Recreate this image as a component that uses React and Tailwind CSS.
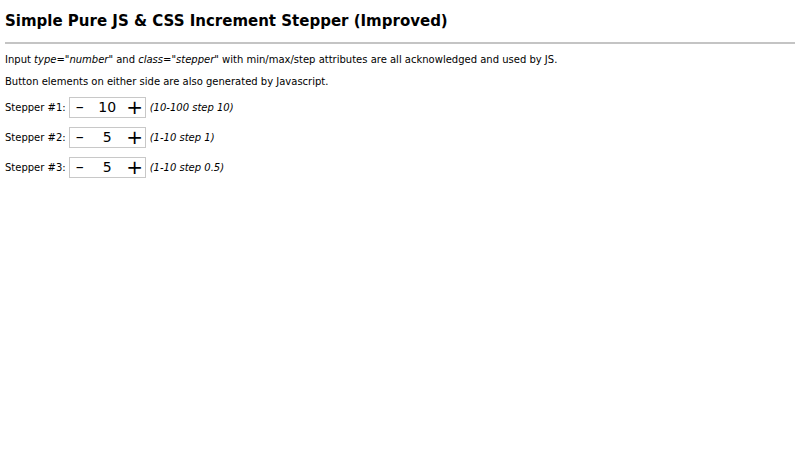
import React from "react";

function Stepper({ label, value, note }) {
  return (
    <div className="flex items-center h-[20px] mb-[10px]">
      <span>{label}:</span>
      <div className="ml-[3px] flex items-center w-[77px] h-[21px] border border-[#c8c8c8] bg-white">
        <button className="w-[20px] text-[16px] leading-none text-black">–</button>
        <span className="flex-1 text-center text-[14px]">{value}</span>
        <button className="w-[20px] text-[20px] leading-none text-black">+</button>
      </div>
      <em className="ml-[4px]">{note}</em>
    </div>
  );
}

export default function App() {
  return (
    <div className="min-h-[450px] bg-white px-[5px] pt-[10px] text-[10px] text-black font-['DejaVu_Sans',sans-serif]">
      <h1 className="text-[15px] font-bold leading-[22px]">
        Simple Pure JS &amp; CSS Increment Stepper (Improved)
      </h1>
      <hr className="mt-[10px] border-t-2 border-[#c4c4c4]" />
      <p className="mt-[8px] leading-[16px]">
        Input <em>type="number"</em> and <em>class="stepper"</em> with min/max/step attributes are all acknowledged and used by JS.
      </p>
      <p className="mt-[6px] leading-[16px]">Button elements on either side are also generated by Javascript.</p>
      <div className="mt-[7px]">
        <Stepper label="Stepper #1" value="10" note="(10-100 step 10)" />
        <Stepper label="Stepper #2" value="5" note="(1-10 step 1)" />
        <Stepper label="Stepper #3" value="5" note="(1-10 step 0.5)" />
      </div>
    </div>
  );
}
